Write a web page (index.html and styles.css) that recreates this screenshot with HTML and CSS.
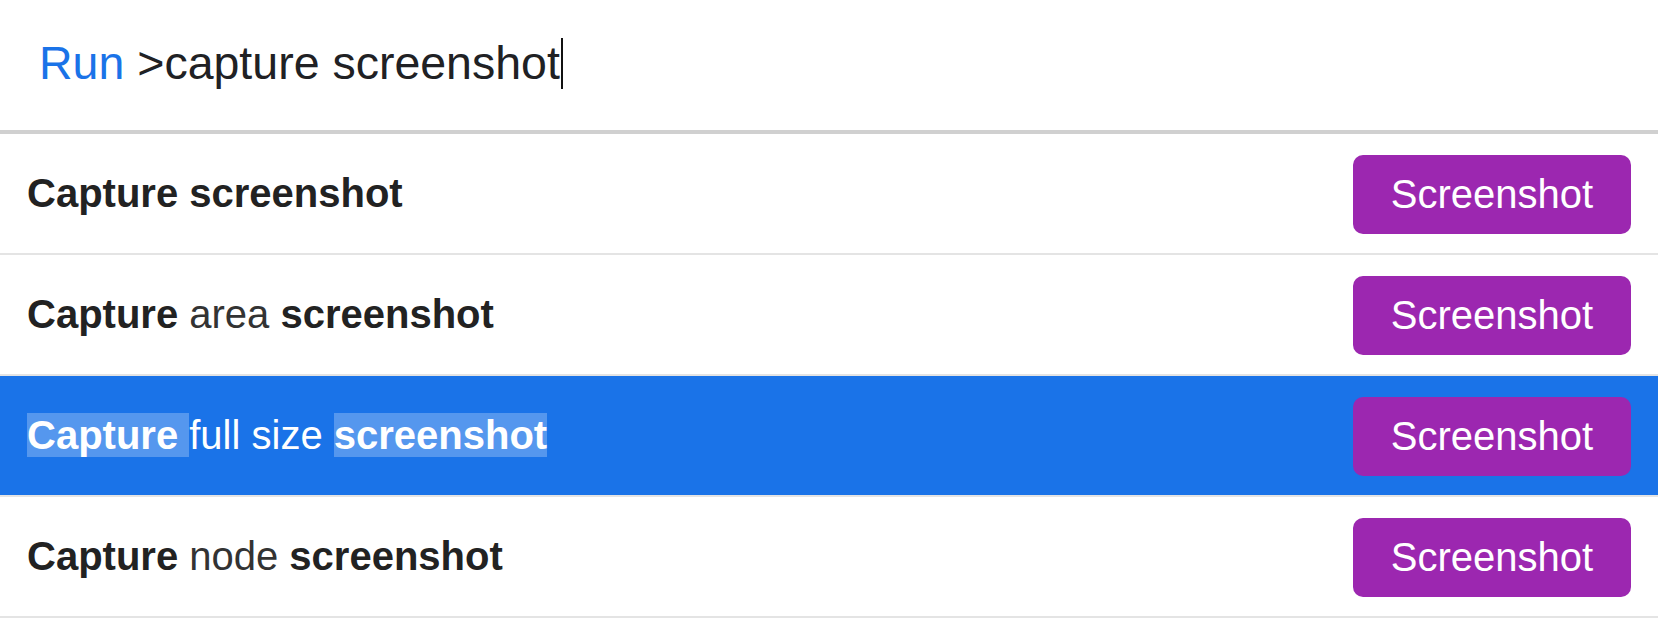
FILE: index.html
```html
<!DOCTYPE html>
<html lang="en">
<head>
<meta charset="utf-8">
<title>Command menu</title>
<link rel="stylesheet" href="styles.css">
</head>
<body>
<div class="palette">
  <div class="prompt">
    <span class="prompt-label">Run</span> <span class="prompt-query">&gt;capture screenshot</span><span class="caret"></span>
  </div>
  <ul class="results">
    <li class="result">
      <span class="result-title"><b>Capture</b> <b>screenshot</b></span>
      <span class="badge">Screenshot</span>
    </li>
    <li class="result">
      <span class="result-title"><b>Capture</b> area <b>screenshot</b></span>
      <span class="badge">Screenshot</span>
    </li>
    <li class="result result-active">
      <span class="result-title"><mark class="hit">Capture </mark>full size <mark class="hit">screenshot</mark></span>
      <span class="badge">Screenshot</span>
    </li>
    <li class="result">
      <span class="result-title"><b>Capture</b> node <b>screenshot</b></span>
      <span class="badge">Screenshot</span>
    </li>
  </ul>
</div>
</body>
</html>
```

FILE: styles.css
```css
html, body {
  margin: 0;
  padding: 0;
  background: #ffffff;
}

body {
  font-family: "Liberation Sans", Arial, Helvetica, sans-serif;
  color: #222222;
}

.palette {
  width: 1658px;
  background: #ffffff;
}

.prompt {
  height: 134px;
  box-sizing: border-box;
  padding: 36px 0 0 39px;
  font-size: 46.5px;
  line-height: normal;
  color: #202124;
  border-bottom: 4px solid #d0d0d0;
  white-space: nowrap;
}

.prompt-label {
  color: #1a73e8;
}

.caret {
  display: inline-block;
  width: 2px;
  height: 51px;
  background: #111111;
  vertical-align: top;
  margin-top: 2px;
  margin-left: 1px;
}

.results {
  list-style: none;
  margin: 0;
  padding: 0;
}

.result {
  display: flex;
  align-items: center;
  justify-content: space-between;
  height: 119px;
  padding: 0 27px 0 27px;
  border-bottom: 2px solid #e4e4e4;
  font-size: 40px;
  color: #333333;
}

.result b {
  font-weight: bold;
  color: #222222;
}

.result-title {
  white-space: nowrap;
}

.result-active {
  background: #1a73e8;
  color: #ffffff;
  border-bottom-color: #e4e4e4;
}

.hit {
  background: rgba(255, 255, 255, 0.26);
  color: #ffffff;
  font-weight: bold;
}

.badge {
  display: flex;
  align-items: center;
  justify-content: center;
  width: 278px;
  height: 79px;
  margin-top: 1px;
  border-radius: 10px;
  background: #9c27b0;
  color: #ffffff;
  font-size: 40px;
  font-weight: normal;
}
```
